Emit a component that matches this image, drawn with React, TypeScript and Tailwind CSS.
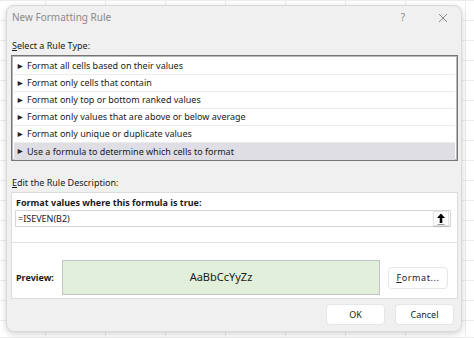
import React from "react";

const ruleTypes = [
  "Format all cells based on their values",
  "Format only cells that contain",
  "Format only top or bottom ranked values",
  "Format only values that are above or below average",
  "Format only unique or duplicate values",
  "Use a formula to determine which cells to format",
];

const font = { fontFamily: '"Noto Sans", "Open Sans", sans-serif' };

function SheetGrid() {
  // faint spreadsheet gridlines behind the dialog
  const cols = [45, 105, 165, 225, 285, 345, 405, 465];
  const rows = [0, 20, 40, 60, 80, 100, 120, 140, 160, 180, 200, 220, 240, 260, 280, 300, 320, 337];
  return (
    <div className="absolute inset-0 bg-white">
      {cols.map((x) => (
        <div key={"c" + x} className="absolute top-0 bottom-0 w-px bg-[#ececec]" style={{ left: x }} />
      ))}
      {rows.map((y) => (
        <div key={"r" + y} className="absolute left-0 right-0 h-px bg-[#ececec]" style={{ top: y }} />
      ))}
    </div>
  );
}

function Button({ children, className = "" }: { children: React.ReactNode; className?: string }) {
  return (
    <div
      className={
        "flex items-center justify-center bg-white rounded-[4px] border border-[#e6e6e6] text-[9px] text-[#1a1a1a] " +
        className
      }
    >
      {children}
    </div>
  );
}

export default function App() {
  return (
    <div className="relative w-[474px] h-[338px] overflow-hidden" style={font}>
      <SheetGrid />
      <div className="relative pt-[5px] pl-[6px]">
        <div className="w-[456px] h-[327px] bg-[#f0f0f0] rounded-[8px] border border-[#d9d9d9] shadow-[0_2px_6px_rgba(0,0,0,0.18)] flex flex-col">
          {/* title bar */}
          <div className="h-[23px] flex items-center pl-[5px] pr-[13px] text-[10px] text-[#8a8a8a]">
            <span className="flex-1">New Formatting Rule</span>
            <span className="mr-[33px]">?</span>
            <svg width="10" height="10" viewBox="0 0 10 10" className="stroke-[#8a8a8a]">
              <path d="M1 1L9 9M9 1L1 9" strokeWidth="1" fill="none" />
            </svg>
          </div>

          <div className="pl-[4px] pr-[3px] flex flex-col text-[9px] text-[#1a1a1a]">
            <div className="mt-[10px] h-[14px] pl-px flex items-center">
              <span>
                <span className="underline">S</span>elect a Rule Type:
              </span>
            </div>
            <div className="mt-[2px] h-[106px] border border-[#767676] bg-white shadow-[inset_0_0_0_1px_#b8b8b8] p-[2px]">
              {ruleTypes.map((t, i) => (
                <div
                  key={t}
                  className={
                    "h-[17px] flex items-center pl-[2px] " +
                    (i === ruleTypes.length - 1 ? "bg-[#dedee4]" : "border-b border-[#ececec]")
                  }
                >
                  <span className="text-[8.5px] w-[11px] text-[#222]">►</span>
                  <span>{t}</span>
                </div>
              ))}
            </div>

            <div className="mt-[15px] h-[14px] pl-px flex items-center">
              <span>
                <span className="underline">E</span>dit the Rule Description:
              </span>
            </div>

            <div className="mt-[2px] h-[107px] bg-white border border-[#dcdcdc] flex flex-col">
              <div className="mt-[3px] h-[14px] pl-[4px] flex items-center font-bold">
                Format values where this formula is true:
              </div>
              <div className="ml-[3px] mr-[6px] h-[17px] border border-[#d6d6d6] flex items-center pl-[2px] pr-px">
                <span className="flex-1">=ISEVEN(B2)</span>
                <div className="w-[16px] h-[15px] bg-white border border-[#e4e4e4] shadow-[0_1px_1px_rgba(0,0,0,0.12)] flex items-center justify-center">
                  <svg width="10" height="12" viewBox="0 0 10 12">
                    <path d="M5 0.5L9 5H6.3V10H3.7V5H1Z" fill="#000" />
                    <path d="M1.5 11.5H8.5" stroke="#9a9a9a" strokeWidth="1" />
                  </svg>
                </div>
              </div>
              <div className="mt-[15px] h-px bg-[#e0e0e0]" />
              <div className="mt-[17px] flex items-center pl-[4px]">
                <span className="w-[46px] font-bold">Preview:</span>
                <div className="w-[318px] h-[35px] bg-[#e2efda] border border-[#c4c4c4] flex items-center justify-center text-[11px]">
                  AaBbCcYyZz
                </div>
                <Button className="ml-[8px] w-[60px] h-[22px] tracking-[0.6px]">
                  <span>
                    <span className="underline">F</span>ormat...
                  </span>
                </Button>
              </div>
            </div>
          </div>

          <div className="mt-[5px] flex justify-end gap-[10px] pr-[7px]">
            <Button className="w-[59px] h-[21px]">OK</Button>
            <Button className="w-[59px] h-[21px]">Cancel</Button>
          </div>
        </div>
      </div>
    </div>
  );
}
